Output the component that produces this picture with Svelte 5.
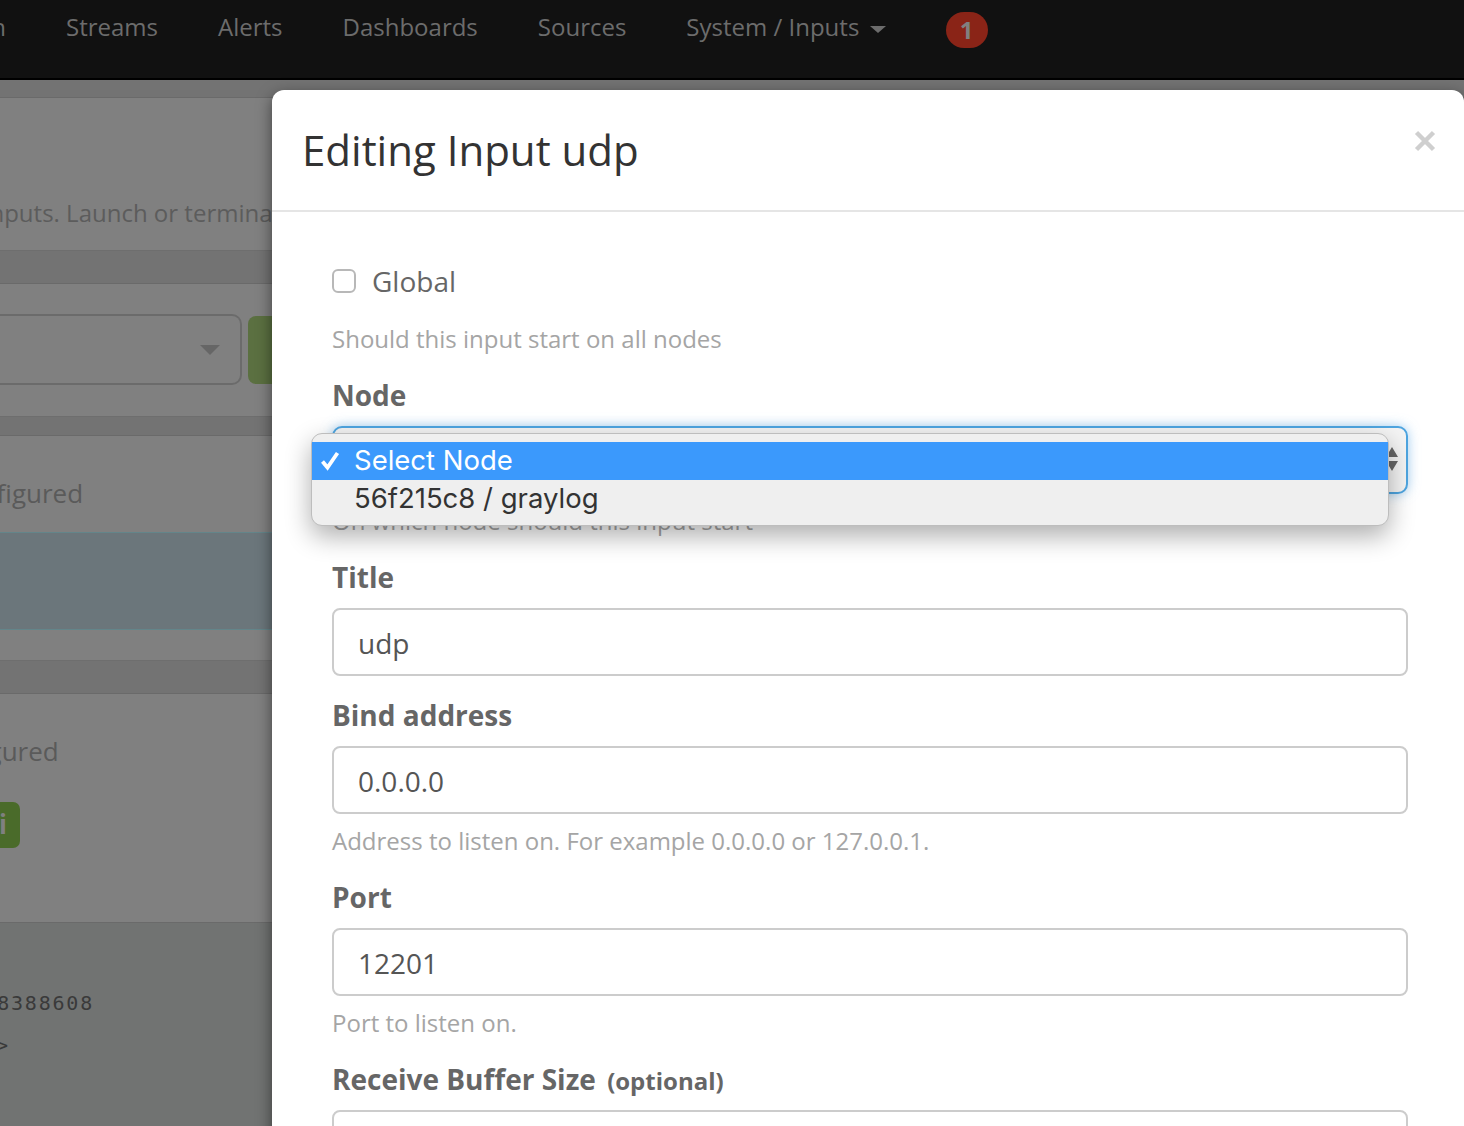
<script>
  const navItems = ['Search', 'Streams', 'Alerts', 'Dashboards', 'Sources'];
  const fields = [
    { label: 'Title', value: 'udp' },
    { label: 'Bind address', value: '0.0.0.0', help: 'Address to listen on. For example 0.0.0.0 or 127.0.0.1.' },
    { label: 'Port', value: '12201', help: 'Port to listen on.' }
  ];
</script>

<div class="screen">
  <nav class="navbar">
    {#each navItems as item}
      <span class="nav-link">{item}</span>
    {/each}
    <span class="nav-link dropdown">System / Inputs <i class="caret"></i></span>
    <span class="badge">1</span>
  </nav>

  <div class="page">
    <div class="band first"></div>
    <section class="panel intro">
      <p class="lead">Graylog nodes accept data via inputs. Launch or terminate as many inputs as you want here.</p>
    </section>
    <div class="band"></div>
    <section class="panel launch">
      <div class="fake-select"><i class="caret dark"></i></div>
      <div class="launch-btn"></div>
    </section>
    <div class="band short"></div>
    <section class="panel global-inputs">
      <h2 class="configured one">Global inputs configured</h2>
      <div class="info-box"></div>
    </section>
    <div class="band"></div>
    <section class="panel local-inputs">
      <h2 class="configured two">Local inputs configured</h2>
      <div class="green-btn"><b>i</b></div>
    </section>
    <footer class="details">
      <div class="mono first-line">recv_buffer_size: 8388608</div>
      <div class="mono">&gt;</div>
    </footer>
  </div>

  <div class="modal">
    <header class="modal-header">
      <h1>Editing Input udp</h1>
      <svg class="close" width="22" height="22" viewBox="0 0 22 22" aria-label="Close">
        <path d="M2.5 2.5 L19.5 19.5 M19.5 2.5 L2.5 19.5" stroke="#cfcfcf" stroke-width="4.5" fill="none" />
      </svg>
    </header>
    <div class="modal-body">
      <div class="check-row">
        <span class="checkbox"></span>
        <span class="check-label">Global</span>
      </div>
      <p class="help global-help">Should this input start on all nodes</p>

      <div class="label">Node</div>
      <div class="native-select">
        <svg class="updown" width="12" height="24" viewBox="0 0 12 24">
          <path d="M6 0 L12 10 H0 Z M6 24 L12 14 H0 Z" fill="#666" />
        </svg>
        <div class="select-popup">
          <div class="option selected">
            <svg class="tick" width="20" height="20" viewBox="0 0 20 20">
              <path d="M1.5 10.5 L6.5 16.5 L16.5 2" stroke="#fff" stroke-width="3.8" fill="none" />
            </svg>
            Select Node
          </div>
          <div class="option">56f215c8 / graylog</div>
        </div>
      </div>
      <p class="help node-help">On which node should this input start</p>

      {#each fields as field}
        <div class="label">{field.label}</div>
        <div class="text-input">{field.value}</div>
        {#if field.help}
          <p class="help">{field.help}</p>
        {:else}
          <div class="spacer"></div>
        {/if}
      {/each}

      <div class="label">Receive Buffer Size <small>(optional)</small></div>
      <div class="text-input"></div>
    </div>
  </div>
</div>

<style>
  :global(body) {
    margin: 0;
    background: #808080;
  }

  .screen {
    position: relative;
    width: 1464px;
    height: 1126px;
    overflow: hidden;
    font-family: "Open Sans", sans-serif;
  }

  .navbar {
    height: 70px;
    padding-top: 8px;
    border-bottom: 2px solid #000;
    background: #111;
    display: flex;
    align-items: flex-start;
    gap: 60px;
    margin-left: -70px;
  }

  .nav-link {
    font-size: 24px;
    line-height: 38px;
    color: #6c6c6c;
    white-space: nowrap;
  }

  .caret {
    display: inline-block;
    width: 0;
    height: 0;
    margin-left: 4px;
    vertical-align: 3px;
    border-top: 7px solid #6c6c6c;
    border-left: 8px solid transparent;
    border-right: 8px solid transparent;
  }

  .badge {
    width: 42px;
    height: 36px;
    margin-top: 4px;
    border-radius: 18px;
    background: #8a2417;
    color: #808080;
    font-size: 24px;
    font-weight: 700;
    line-height: 36px;
    text-align: center;
  }

  .band {
    height: 32px;
    background: #737373;
    border-top: 1px solid #6e6e6e;
    border-bottom: 1px solid #6a6a6a;
  }

  .band.first {
    height: 17px;
    border-top: 0;
  }

  .band.short {
    height: 18px;
  }

  .panel {
    background: #808080;
    color: #5c5c5c;
  }

  .intro {
    height: 152px;
    overflow: hidden;
  }

  .lead {
    margin: 97px 0 0 -357px;
    font-size: 24px;
    line-height: 36px;
    white-space: nowrap;
  }

  .launch {
    height: 132px;
    display: flex;
    align-items: flex-start;
    gap: 6px;
    padding-top: 30px;
    box-sizing: border-box;
  }

  .fake-select {
    width: 242px;
    height: 71px;
    box-sizing: border-box;
    border: 2px solid #6b6b6b;
    border-left: 0;
    border-radius: 0 10px 10px 0;
    display: flex;
    justify-content: flex-end;
    align-items: center;
    padding-right: 20px;
  }

  .caret.dark {
    margin-left: 0;
    border-top: 10px solid #666;
    border-left-width: 10px;
    border-right-width: 10px;
  }

  .launch-btn {
    width: 60px;
    height: 68px;
    margin-top: 2px;
    border-radius: 8px;
    background: #5b7041;
  }

  .global-inputs {
    height: 224px;
    padding-top: 37px;
    box-sizing: border-box;
  }

  .configured {
    margin: 0;
    font-size: 26px;
    font-weight: 400;
    line-height: 40px;
    white-space: nowrap;
    color: #5a5a5a;
  }

  .configured.one {
    margin-left: -215px;
  }

  .info-box {
    height: 96px;
    margin-top: 19px;
    background: #6b767b;
    border-top: 1px solid #63858a;
    border-bottom: 1px solid #63858a;
  }

  .local-inputs {
    height: 228px;
    padding-top: 37px;
    box-sizing: border-box;
  }

  .configured.two {
    margin-left: -224px;
  }

  .green-btn {
    width: 20px;
    height: 46px;
    margin-top: 31px;
    border-radius: 0 7px 7px 0;
    background: #4a6b2a;
    color: #808080;
    font-size: 26px;
    line-height: 44px;
    overflow: hidden;
  }

  .green-btn b {
    margin-left: -1px;
    display: block;
  }

  .details {
    height: 204px;
    background: #717372;
    border-top: 1px solid #6a6a6a;
    box-sizing: border-box;
    padding-top: 66px;
  }

  .mono {
    font-family: "DejaVu Sans Mono", monospace;
    font-size: 20px;
    line-height: 28px;
    letter-spacing: 1.8px;
    color: #3a3a3a;
    white-space: nowrap;
  }

  .first-line {
    margin-left: -252px;
    margin-bottom: 14px;
  }

  .mono:not(.first-line) {
    margin-left: -4px;
  }

  .modal {
    position: absolute;
    left: 272px;
    top: 90px;
    width: 1192px;
    height: 1100px;
    background: #fff;
    border-radius: 12px;
    box-shadow: 0 5px 15px rgba(0, 0, 0, 0.5);
  }

  .modal-header {
    height: 120px;
    border-bottom: 2px solid #e5e5e5;
    padding-left: 30px;
    position: relative;
  }

  .modal-header h1 {
    margin: 0;
    padding-top: 30px;
    font-size: 42px;
    font-weight: 400;
    line-height: 60px;
    color: #333;
  }

  .close {
    position: absolute;
    right: 28px;
    top: 40px;
  }

  .modal-body {
    padding: 51px 56px 0 60px;
    color: #666;
  }

  .check-row {
    display: flex;
    align-items: center;
    gap: 16px;
    height: 36px;
  }

  .checkbox {
    width: 24px;
    height: 24px;
    box-sizing: border-box;
    border: 2px solid #b8b8b8;
    border-radius: 6px;
    background: #fff;
  }

  .check-label {
    font-size: 28px;
    line-height: 36px;
    color: #666;
  }

  .help {
    margin: 0;
    height: 60px;
    padding-top: 9px;
    box-sizing: border-box;
    font-size: 24px;
    line-height: 36px;
    color: #a5a5a5;
    white-space: nowrap;
  }

  .global-help {
    margin-top: 13px;
  }

  .label {
    height: 40px;
    font-size: 28px;
    font-weight: 700;
    line-height: 38px;
    color: #666;
    margin-top: 4px;
  }

  .label small {
    font-size: 24px;
    margin-left: 4px;
  }

  .native-select {
    position: relative;
    height: 68px;
    margin-top: 10px;
    box-sizing: border-box;
    border: 2px solid #4ea5e0;
    border-radius: 10px;
    background: #f4f4f4;
    box-shadow: 0 0 12px rgba(102, 175, 233, 0.6);
  }

  .updown {
    position: absolute;
    right: 8px;
    top: 19px;
  }

  .select-popup {
    position: absolute;
    z-index: 2;
    left: -23px;
    right: 17px;
    top: 5px;
    height: 93px;
    padding-top: 8px;
    box-sizing: border-box;
    border: 1px solid #bdbdbd;
    border-radius: 11px;
    background: #efefef;
    box-shadow: 0 10px 26px rgba(0, 0, 0, 0.32);
    font-family: Inter, "Liberation Sans", sans-serif;
  }

  .option {
    position: relative;
    height: 38px;
    padding-left: 42px;
    font-size: 27.5px;
    line-height: 36px;
    color: #333;
  }

  .option.selected {
    background: #3b99fc;
    color: #fff;
  }

  .tick {
    position: absolute;
    left: 9px;
    top: 9px;
  }

  .node-help {
    padding-top: 9px;
    height: 60px;
  }

  .text-input {
    height: 68px;
    margin-top: 10px;
    box-sizing: border-box;
    border: 2px solid #ccc;
    border-radius: 8px;
    padding-left: 24px;
    font-size: 28px;
    line-height: 66px;
    color: #555;
  }

  .spacer {
    height: 16px;
  }
</style>
